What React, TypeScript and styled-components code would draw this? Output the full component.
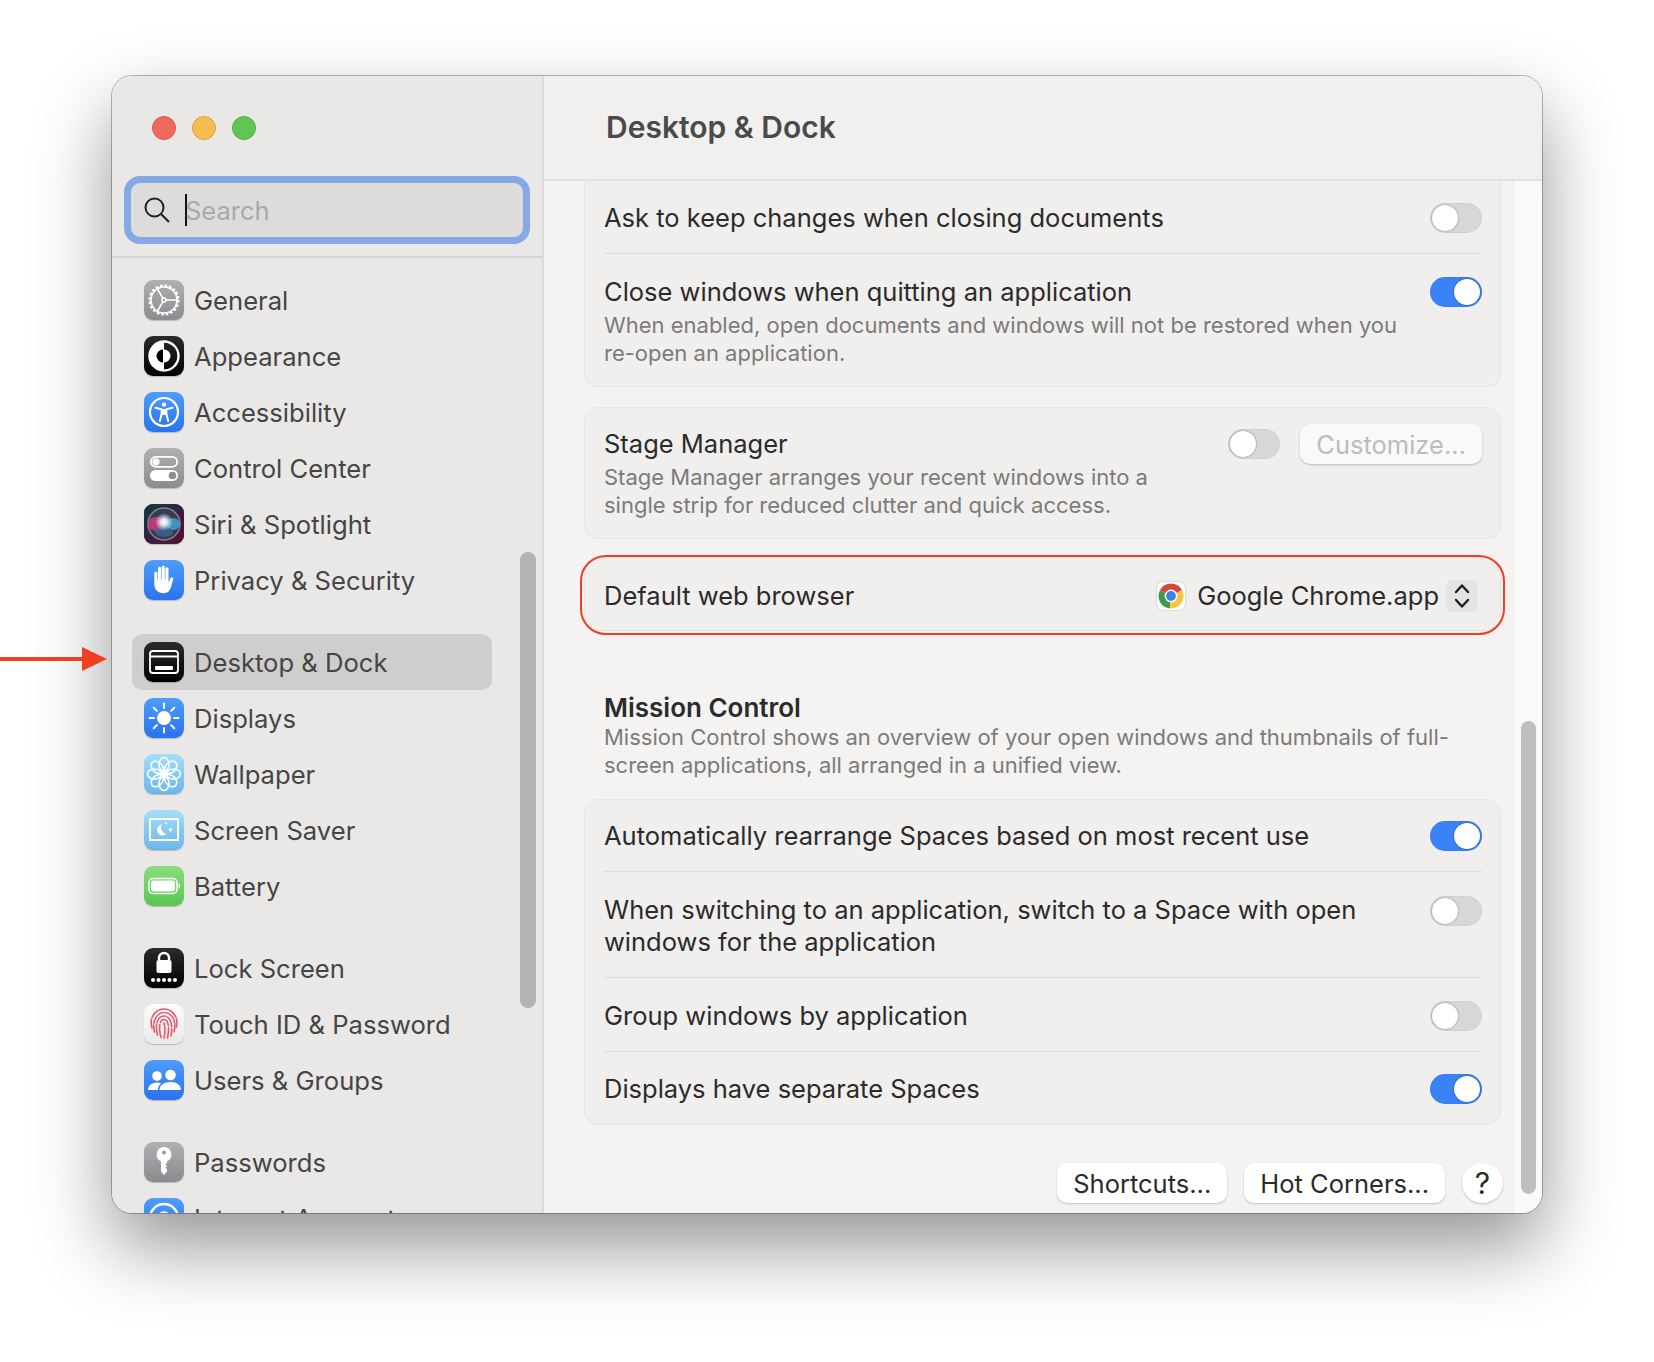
import React from "react";
import styled, { createGlobalStyle } from "styled-components";

const GlobalStyle = createGlobalStyle`
  html, body {
    margin: 0;
    padding: 0;
    background: #fff;
  }
  body {
    width: 1654px;
    height: 1362px;
    overflow: hidden;
    font-family: Inter, "Liberation Sans", sans-serif;
  }
  * { box-sizing: border-box; }
`;

const Page = styled.div`
  position: relative;
  width: 1654px;
  height: 1362px;
  padding: 76px 112px;
  background: #fff;
`;

const Arrow = styled.svg`
  position: absolute;
  left: 0;
  top: 645px;
`;

const Window = styled.div`
  display: flex;
  width: 1430px;
  height: 1137px;
  border-radius: 20px;
  overflow: hidden;
  background: #f4f3f1;
  box-shadow: 0 0 0 1px rgba(0, 0, 0, 0.28), 0 34px 76px rgba(0, 0, 0, 0.42);
`;

const Sidebar = styled.aside`
  position: relative;
  flex: 0 0 432px;
  display: flex;
  flex-direction: column;
  background: #e9e8e6;
  border-right: 2px solid #dddcda;
  overflow: hidden;
`;

const Lights = styled.div`
  flex: none;
  display: flex;
  gap: 16px;
  padding: 40px 0 0 40px;
`;

const Light = styled.span<{ $bg: string; $edge: string }>`
  width: 24px;
  height: 24px;
  border-radius: 50%;
  background: ${p => p.$bg};
  border: 1px solid ${p => p.$edge};
`;

const SearchBox = styled.div`
  flex: none;
  display: flex;
  align-items: center;
  gap: 12px;
  height: 68px;
  margin: 36px 12px 0 12px;
  padding: 0 0 0 13px;
  background: #dddcda;
  border: 7px solid #86a8e9;
  border-radius: 16px;
`;

const Caret = styled.span`
  width: 2px;
  height: 32px;
  background: #111;
  margin-left: 3px;
`;

const Placeholder = styled.span`
  margin-left: -14px;
  font-size: 25.5px;
  color: #aaa9a7;
`;

const SideDivider = styled.div`
  flex: none;
  height: 2px;
  margin-top: 12px;
  background: #d5d4d2;
`;

const SideList = styled.nav`
  padding: 14px 0 0 20px;
`;

const SideGroup = styled.div`
  & + & {
    margin-top: 26px;
  }
`;

const SideRow = styled.div<{ $active?: boolean }>`
  display: flex;
  align-items: center;
  gap: 10px;
  width: 360px;
  height: 56px;
  padding-left: 12px;
  border-radius: 10px;
  background: ${p => (p.$active ? "#cfcecc" : "transparent")};
  color: #454545;
  font-size: 25.6px;
  white-space: nowrap;
`;

const AppIcon = styled.span<{ $bg: string }>`
  flex: 0 0 40px;
  width: 40px;
  height: 40px;
  border-radius: 9px;
  background: ${p => p.$bg};
  box-shadow: 0 1px 1px rgba(0, 0, 0, 0.22);
  overflow: hidden;
  svg {
    display: block;
  }
`;

const SideThumb = styled.div`
  position: absolute;
  left: 408px;
  top: 476px;
  width: 16px;
  height: 456px;
  border-radius: 8px;
  background: #b4b3b1;
`;

const Main = styled.main`
  flex: 1;
  display: flex;
  flex-direction: column;
  min-width: 0;
`;

const Header = styled.header`
  flex: 0 0 105px;
  display: flex;
  align-items: center;
  padding: 0 0 2px 62px;
  background: #f1f0ee;
  border-bottom: 2px solid #e2e1df;
  font-size: 30px;
  font-weight: 600;
  color: #4a4a4a;
`;

const Body = styled.div`
  flex: 1;
  display: flex;
  min-height: 0;
`;

const Scroller = styled.div`
  flex: 1;
  padding: 0 12px 0 40px;
  overflow: hidden;
`;

const Track = styled.div`
  flex: 0 0 29px;
  padding: 540px 6px 0 7px;
  background: #f9f9f8;
  border-left: 1px solid #ebeae8;
`;

const Thumb = styled.div`
  height: 473px;
  border-radius: 8px;
  background: #bfbfbe;
`;

const Card = styled.section<{ $clipped?: boolean; $flagged?: boolean; $gap?: number }>`
  position: relative;
  margin-top: ${p => p.$gap ?? 0}px;
  padding: 0 18px 0 19px;
  background: #f0efed;
  border: 1px solid #e6e5e3;
  border-top-width: ${p => (p.$clipped ? 0 : 1)}px;
  border-radius: ${p => (p.$clipped ? "0 0 14px 14px" : "14px")};
  ${p =>
    p.$flagged &&
    `
    &::after {
      content: "";
      position: absolute;
      inset: -3px -5px -5px -5px;
      border: 2.5px solid #ee3f24;
      border-radius: 26px;
    }
  `}
`;

const Row = styled.div<{ $pad?: string }>`
  display: flex;
  justify-content: space-between;
  align-items: flex-start;
  padding: ${p => p.$pad ?? "19px 0"};
  & + & {
    border-top: 1px solid #dfdedc;
  }
`;

const RowText = styled.div`
  min-width: 0;
`;

const Label = styled.div<{ $tight?: boolean }>`
  font-size: 25.5px;
  line-height: ${p => (p.$tight ? 32 : 34)}px;
  color: #2b2b2b;
  white-space: nowrap;
`;

const Desc = styled.div`
  margin-top: 2px;
  font-size: 22px;
  line-height: 28px;
  color: #7b7b7b;
  white-space: nowrap;
`;

const Controls = styled.div`
  display: flex;
  align-items: center;
  gap: 20px;
  margin-top: -3px;
`;

const Switch = styled.span<{ $on?: boolean; $inline?: boolean }>`
  display: flex;
  justify-content: ${p => (p.$on ? "flex-end" : "flex-start")};
  align-items: center;
  width: 52px;
  height: 30px;
  margin-top: ${p => (p.$inline ? 0 : 2)}px;
  padding: 2px;
  border-radius: 15px;
  background: ${p => (p.$on ? "#3b82f6" : "#d8d7d5")};
  box-shadow: inset 0 0 0 1px rgba(0, 0, 0, 0.03);
  &::before {
    content: "";
    width: 26px;
    height: 26px;
    border-radius: 50%;
    background: #fff;
    box-shadow: 0 0 2px rgba(0, 0, 0, 0.45);
  }
`;

const Btn = styled.button<{ $disabled?: boolean; $round?: boolean }>`
  height: 40px;
  ${p => (p.$round ? "width: 41px; padding: 0;" : "padding: 0 16px;")}
  border: 0;
  border-radius: ${p => (p.$round ? "50%" : "10px")};
  background: ${p => (p.$disabled ? "#f9f9f8" : "#fff")};
  color: ${p => (p.$disabled ? "#bcbcba" : "#2b2b2b")};
  font-family: inherit;
  font-size: ${p => (p.$round ? 30 : 25.5)}px;
  white-space: nowrap;
  box-shadow: 0 1px 2px rgba(0, 0, 0, 0.22);
`;

const PopupValue = styled.div`
  display: flex;
  align-items: center;
  color: #2b2b2b;
  font-size: 25.5px;
  line-height: 34px;
  margin-right: 4px;
`;

const ChromeTile = styled.span`
  display: block;
  width: 28px;
  height: 28px;
  margin-right: 12px;
  border-radius: 6px;
  background: #fff;
  box-shadow: 0 0 2px rgba(0, 0, 0, 0.3);
`;

const Stepper = styled.span`
  display: flex;
  align-items: center;
  justify-content: center;
  width: 32px;
  height: 32px;
  margin-left: 7px;
  border-radius: 7px;
  background: #e5e4e2;
`;

const SectionHead = styled.div`
  margin-top: 61px;
  padding-left: 20px;
`;

const SectionTitle = styled.h2`
  margin: 0;
  font-size: 26px;
  line-height: 31px;
  font-weight: 600;
  color: #2b2b2b;
`;

const SectionDesc = styled(Desc)`
  margin-top: 0;
`;

const Footer = styled.div`
  display: flex;
  justify-content: flex-end;
  gap: 17px;
  margin: 38px -2px 0 0;
`;

const gray = "linear-gradient(#b0b0b3, #8b8b8f)";
const blue = "linear-gradient(#4d9dfb, #2a72ef)";
const black = "linear-gradient(#2b2b2b, #000)";
const sky = "linear-gradient(#a2def9, #6bb6ea)";

const Svg = ({ children }: { children: React.ReactNode }) => (
  <svg width="40" height="40" viewBox="0 0 40 40" fill="none">
    {children}
  </svg>
);

const GeneralIcon = () => (
  <Svg>
    <circle cx="20" cy="20" r="13" stroke="#fff" strokeWidth="1.6" />
    <circle cx="20" cy="20" r="14.2" stroke="#fff" strokeWidth="2.8" strokeDasharray="2.6 1.86" />
    <circle cx="20" cy="20" r="2" stroke="#fff" strokeWidth="1.4" />
    <path d="M22 20H33M19 21.7L13.5 31M19 18.3L13.5 9" stroke="#fff" strokeWidth="1.6" />
  </Svg>
);

const AppearanceIcon = () => (
  <Svg>
    <circle cx="20" cy="20" r="14.5" stroke="#fff" strokeWidth="2.4" />
    <path d="M20 6A14 14 0 0 0 20 34Z" fill="#fff" />
    <circle cx="20" cy="20" r="6.5" fill="#fff" />
    <path d="M19 13.5A6.5 6.5 0 0 0 19 26.5Z" fill="#000" />
  </Svg>
);

const AccessibilityIcon = () => (
  <Svg>
    <circle cx="20" cy="20" r="14" stroke="#fff" strokeWidth="2.2" />
    <circle cx="20" cy="12.6" r="2.2" fill="#fff" />
    <path
      d="M11.5 15.8L17.6 17.3V22L15.8 29M28.5 15.8L22.4 17.3V22L24.2 29"
      stroke="#fff"
      strokeWidth="2"
      strokeLinecap="round"
      strokeLinejoin="round"
    />
    <rect x="17.6" y="17" width="4.8" height="6" fill="#fff" />
  </Svg>
);

const ControlIcon = () => (
  <Svg>
    <rect x="6.8" y="8.8" width="26.4" height="10" rx="5" stroke="#fff" strokeWidth="1.8" />
    <circle cx="12" cy="13.8" r="3.6" fill="#fff" />
    <rect x="6" y="22" width="28" height="11" rx="5.5" fill="#fff" />
    <circle cx="28.5" cy="27.5" r="3.8" fill="#8d8d91" />
  </Svg>
);

const SiriIcon = () => (
  <Svg>
    <defs>
      <linearGradient id="siriBg" x1="0" y1="0" x2="1" y2="1">
        <stop offset="0%" stopColor="#123a3f" />
        <stop offset="55%" stopColor="#3a1d45" />
        <stop offset="100%" stopColor="#5a1030" />
      </linearGradient>
      <radialGradient id="siriCore" cx="50%" cy="50%" r="50%">
        <stop offset="0%" stopColor="#fff" />
        <stop offset="35%" stopColor="#dfe6f5" />
        <stop offset="100%" stopColor="#d6dff2" stopOpacity="0" />
      </radialGradient>
    </defs>
    <rect width="40" height="40" fill="url(#siriBg)" />
    <circle cx="20" cy="20" r="17" fill="#50606a" opacity=".35" />
    <circle cx="20" cy="20" r="16" stroke="#9aa6ad" strokeWidth="1.4" opacity=".7" />
    <ellipse cx="12.5" cy="20" rx="9" ry="7" fill="#d93a79" opacity=".8" />
    <ellipse cx="29" cy="20" rx="7" ry="6" fill="#3aa8cc" opacity=".85" />
    <ellipse cx="20" cy="28" rx="9" ry="5" fill="#2d6f9a" opacity=".75" />
    <circle cx="20" cy="18" r="9" fill="url(#siriCore)" />
  </Svg>
);

const HandIcon = () => (
  <Svg>
    <path
      transform="translate(1.6 1) scale(.92)"
      d="M9.5 13a1.7 1.7 0 0 1 3.4 0V20h.6V8a1.7 1.7 0 0 1 3.4 0V20h.6V6.5a1.7 1.7 0 0 1 3.4 0V20h.6V8.500a1.7 1.7 0 0 1 3.4 0v15l1.6-4c.5-1.3 1.6-2 2.6-1.6 1 .4 1.3 1.3.9 2.5l-2.6 8.4C26.2 32.6 24 35 19.6 35 13.5 35 9.500 31 9.500 25.500Z"
      fill="#fff"
    />
  </Svg>
);

const DesktopIcon = () => (
  <Svg>
    <rect x="6" y="9" width="28" height="22" rx="3" stroke="#fff" strokeWidth="1.8" />
    <path d="M6 14.500H34" stroke="#fff" strokeWidth="1.8" />
    <rect x="11" y="24" width="18" height="4" rx="1" fill="#fff" />
  </Svg>
);

const DisplaysIcon = () => (
  <Svg>
    <circle cx="20" cy="20" r="7" fill="#fff" />
    <path
      d="M20 5.500V10M20 30V34.500M5.500 20H10M30 20H34.500M9.700 9.700L12.900 12.900M27.100 27.100L30.300 30.300M9.700 30.300L12.900 27.100M27.100 12.900L30.300 9.700"
      stroke="#fff"
      strokeWidth="2"
      strokeLinecap="round"
    />
  </Svg>
);

const WallpaperIcon = () => (
  <Svg>
    {[0, 45, 90, 135, 180, 225, 270, 315].map(a => (
      <ellipse
        key={a}
        cx="20"
        cy="10.500"
        rx="5"
        ry="7"
        stroke="#fff"
        strokeWidth="1.6"
        transform={`rotate(${a} 20 20)`}
      />
    ))}
    <circle cx="20" cy="20" r="2.2" fill="#fff" />
  </Svg>
);

const SaverIcon = () => (
  <Svg>
    <rect x="6" y="9" width="28" height="21" stroke="#fff" strokeWidth="2" />
    <path d="M18 14.500a5.500 5.500 0 1 0 4.600 9.200A6 6 0 0 1 18 14.500Z" fill="#fff" />
    <path d="M26.500 16.500l.8 2.400 2.400.8-2.400.8-.8 2.400-.8-2.400-2.400-.8 2.400-.8ZM22 11.500l.4 1.300 1.300.4-1.300.4-.4 1.300-.4-1.300-1.300-.4 1.300-.4Z" fill="#fff" />
  </Svg>
);

const BatteryIcon = () => (
  <Svg>
    <rect x="5" y="12.500" width="28" height="15" rx="4" stroke="#fff" strokeWidth="1.5" />
    <rect x="7" y="14.500" width="24" height="11" rx="2.4" fill="#fff" />
    <path d="M34.600 17.500c1.200.3 1.600 1.200 1.600 2.500s-.4 2.200-1.600 2.500Z" fill="#fff" />
  </Svg>
);

const LockIcon = () => (
  <Svg>
    <path d="M15 14V10a5 5 0 0 1 10 0V14" stroke="#fff" strokeWidth="2.4" />
    <rect x="12.500" y="12" width="15" height="13" rx="2" fill="#fff" />
    {[9, 14.500, 20, 25.500, 31].map(x => (
      <circle key={x} cx={x} cy="32" r="2" fill="#fff" />
    ))}
  </Svg>
);

const TouchIcon = () => (
  <Svg>
    <g stroke="#e4566f" strokeWidth="1.6" strokeLinecap="round">
      <path d="M8 24C4.500 13 12 5 20 5s15.500 8 12 19" strokeDasharray="9 1.6" />
      <path d="M10.500 28C7.500 18 12.500 8.500 20 8.500S33 16 30 28" strokeDasharray="7 1.6" />
      <path d="M13.500 31C10.500 20 14 12 20 12s9.500 8 7 20" strokeDasharray="11 2" />
      <path d="M17 33.500C14 22 16 15.500 20 15.500s6 7 3.500 18.500" strokeDasharray="13 2" />
      <path d="M20 34c1-5 1.500-10 0-15" />
    </g>
  </Svg>
);

const UsersIcon = () => (
  <Svg>
    <circle cx="13" cy="16" r="4.800" fill="#fff" />
    <circle cx="26.500" cy="15" r="5.300" fill="#fff" />
    <path d="M4 30c0-4.500 4-7.500 9-7.500 1.600 0 3 .3 4.200 1-2 1.500-3.200 3.600-3.400 6.500Z" fill="#fff" />
    <path d="M15.500 30c0-5 4.500-8 11-8S37 25 37 30Z" fill="#fff" />
  </Svg>
);

const KeyIcon = () => (
  <Svg>
    <path
      d="M20 5a7.500 7.500 0 0 1 3 14.300V21l-1.600 1.500 1.600 1.700-1.600 1.500 1.600 1.700v2.100L20 33l-3-3.500V19.300A7.500 7.500 0 0 1 20 5Z"
      fill="#fff"
    />
    <circle cx="20" cy="10.500" r="2" fill="#9a9a9e" />
  </Svg>
);

const AtIcon = () => (
  <Svg>
    <circle cx="20" cy="20" r="14" stroke="#fff" strokeWidth="2.4" />
    <circle cx="20" cy="20" r="5.500" stroke="#fff" strokeWidth="2.4" />
  </Svg>
);

type SideEntry = { name: string; bg: string; icon: React.ReactNode; active?: boolean };

const groups: SideEntry[][] = [
  [
    { name: "General", bg: gray, icon: <GeneralIcon /> },
    { name: "Appearance", bg: black, icon: <AppearanceIcon /> },
    { name: "Accessibility", bg: blue, icon: <AccessibilityIcon /> },
    { name: "Control Center", bg: gray, icon: <ControlIcon /> },
    { name: "Siri & Spotlight", bg: "#10242a", icon: <SiriIcon /> },
    { name: "Privacy & Security", bg: blue, icon: <HandIcon /> },
  ],
  [
    { name: "Desktop & Dock", bg: black, icon: <DesktopIcon />, active: true },
    { name: "Displays", bg: blue, icon: <DisplaysIcon /> },
    { name: "Wallpaper", bg: sky, icon: <WallpaperIcon /> },
    { name: "Screen Saver", bg: sky, icon: <SaverIcon /> },
    { name: "Battery", bg: "linear-gradient(#88dd7e, #5bc551)", icon: <BatteryIcon /> },
  ],
  [
    { name: "Lock Screen", bg: black, icon: <LockIcon /> },
    { name: "Touch ID & Password", bg: "linear-gradient(#fcfcfc, #e8e8e8)", icon: <TouchIcon /> },
    { name: "Users & Groups", bg: blue, icon: <UsersIcon /> },
  ],
  [
    { name: "Passwords", bg: gray, icon: <KeyIcon /> },
    { name: "Internet Accounts", bg: blue, icon: <AtIcon /> },
  ],
];

const ChromeLogo = () => (
  <ChromeTile>
    <svg width="28" height="28" viewBox="0 0 28 28">
      <path d="M14 14L3 8A12.500 12.500 0 0 1 25 8Z" fill="#d8453a" />
      <path d="M14 14L13 26.500A12.500 12.500 0 0 1 3 8Z" fill="#3f9a4e" />
      <path d="M14 14L25 8A12.500 12.500 0 0 1 13 26.500Z" fill="#f6c543" />
      <circle cx="14" cy="14" r="6.400" fill="#fff" />
      <circle cx="14" cy="14" r="4.900" fill="#3f7fe8" />
    </svg>
  </ChromeTile>
);

const App = () => (
  <Page>
    <GlobalStyle />
    <Window>
      <Sidebar>
        <Lights>
          <Light $bg="#ee6a5f" $edge="#d9584e" />
          <Light $bg="#f5bd4f" $edge="#dfa53c" />
          <Light $bg="#61c554" $edge="#52ad46" />
        </Lights>
        <SearchBox>
          <svg width="26" height="26" viewBox="0 0 26 26" fill="none">
            <circle cx="10.500" cy="10.500" r="9" stroke="#222" strokeWidth="2" />
            <path d="M17 17L25 25" stroke="#222" strokeWidth="2.200" />
          </svg>
          <Caret />
          <Placeholder>Search</Placeholder>
        </SearchBox>
        <SideDivider />
        <SideList>
          {groups.map((group, i) => (
            <SideGroup key={i}>
              {group.map(item => (
                <SideRow key={item.name} $active={item.active}>
                  <AppIcon $bg={item.bg}>{item.icon}</AppIcon>
                  {item.name}
                </SideRow>
              ))}
            </SideGroup>
          ))}
        </SideList>
        <SideThumb />
      </Sidebar>
      <Main>
        <Header>Desktop &amp; Dock</Header>
        <Body>
          <Scroller>
            <Card $clipped>
              <Row $pad="20px 0 18px">
                <Label>Ask to keep changes when closing documents</Label>
                <Switch />
              </Row>
              <Row $pad="21px 0 19px">
                <RowText>
                  <Label>Close windows when quitting an application</Label>
                  <Desc>
                    When enabled, open documents and windows will not be restored when you
                    <br />
                    re-open an application.
                  </Desc>
                </RowText>
                <Switch $on />
              </Row>
            </Card>
            <Card $gap={20}>
              <Row>
                <RowText>
                  <Label>Stage Manager</Label>
                  <Desc>
                    Stage Manager arranges your recent windows into a
                    <br />
                    single strip for reduced clutter and quick access.
                  </Desc>
                </RowText>
                <Controls>
                  <Switch $inline />
                  <Btn $disabled>Customize...</Btn>
                </Controls>
              </Row>
            </Card>
            <Card $gap={18} $flagged>
              <Row $pad="21px 0 17px">
                <Label>Default web browser</Label>
                <PopupValue>
                  <ChromeLogo />
                  Google Chrome.app
                  <Stepper>
                    <svg width="16" height="26" viewBox="0 0 16 26" fill="none">
                      <path d="M2 9L8 2.500L14 9M2 17L8 23.500L14 17" stroke="#1f1f1f" strokeWidth="2.400" strokeLinecap="round" strokeLinejoin="round" />
                    </svg>
                  </Stepper>
                </PopupValue>
              </Row>
            </Card>
            <SectionHead>
              <SectionTitle>Mission Control</SectionTitle>
              <SectionDesc>
                Mission Control shows an overview of your open windows and thumbnails of full-
                <br />
                screen applications, all arranged in a unified view.
              </SectionDesc>
            </SectionHead>
            <Card $gap={20}>
              <Row $pad="19px 0 18px">
                <Label>Automatically rearrange Spaces based on most recent use</Label>
                <Switch $on />
              </Row>
              <Row $pad="22px 0 19px">
                <Label $tight>
                  When switching to an application, switch to a Space with open
                  <br />
                  windows for the application
                </Label>
                <Switch />
              </Row>
              <Row $pad="21px 0 18px">
                <Label>Group windows by application</Label>
                <Switch />
              </Row>
              <Row $pad="20px 0 18px">
                <Label>Displays have separate Spaces</Label>
                <Switch $on />
              </Row>
            </Card>
            <Footer>
              <Btn>Shortcuts...</Btn>
              <Btn>Hot Corners...</Btn>
              <Btn $round>?</Btn>
            </Footer>
          </Scroller>
          <Track>
            <Thumb />
          </Track>
        </Body>
      </Main>
    </Window>
    <Arrow width="110" height="30" viewBox="0 0 110 30">
      <path d="M0 14H84" stroke="#ee4023" strokeWidth="4" />
      <path d="M82 2L107 14L82 26Z" fill="#ee4023" />
    </Arrow>
  </Page>
);

export default App;
